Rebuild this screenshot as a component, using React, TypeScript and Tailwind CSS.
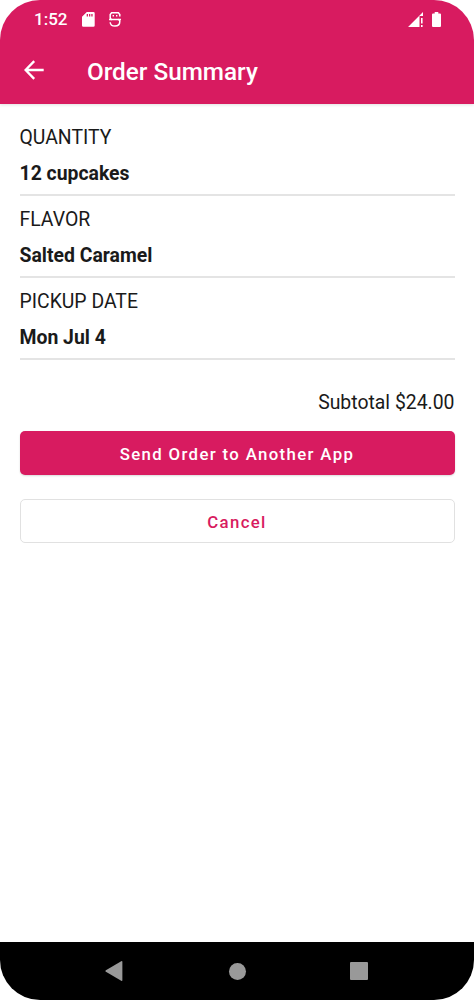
const summary = [
  { label: "QUANTITY", value: "12 cupcakes" },
  { label: "FLAVOR", value: "Salted Caramel" },
  { label: "PICKUP DATE", value: "Mon Jul 4" },
];

function StatusBar() {
  return (
    <div className="flex h-[38px] items-center pr-[33px] pl-[34px] text-white">
      <span className="text-[17px] leading-5 font-medium">1:52</span>
      {/* SD card */}
      <svg className="ml-[15px]" width="13" height="15" viewBox="0 0 13 15">
        <path
          fill="currentColor"
          fillRule="evenodd"
          d="M4.8 0H11.4Q12.7 0 12.7 1.3V13.5Q12.7 14.8 11.4 14.8H1.3Q0 14.8 0 13.5V4.8ZM4.7 2V4.4H6V2ZM7 2V4.4H8.3V2ZM9.3 2V4.4H10.6V2Z"
        />
      </svg>
      {/* Debug robot */}
      <svg
        className="ml-[14px]"
        width="12"
        height="15"
        viewBox="0 0 12 15"
        fill="none"
        stroke="currentColor"
        strokeWidth="1.5"
      >
        <path d="M10.8 4.4V2.6L9.4 .8H2.6L1.2 2.6V5.4Q1.2 7.5 3 7.5H9Q10.8 7.5 10.8 9.6C10.8 12.6 8.9 14.1 6 14.1C3.4 14.1 1.4 12.8 1.2 10.2" />
        <path d="M0 7.5H3M9 7.5H12" strokeWidth="1.3" />
        <path d="M3.6 3.7H5M7 3.7H8.4" strokeWidth="1.4" />
      </svg>
      <div className="ml-auto flex items-center gap-[9px]">
        <svg width="15" height="15" viewBox="0 0 15 15" fill="currentColor">
          <path d="M0 15L15 0V4H11.5V15Z" />
          <path d="M13 6H14.6V11.5H13ZM13 13H14.6V15H13Z" />
        </svg>
        <svg width="9" height="15" viewBox="0 0 9 15" fill="currentColor">
          <path d="M2.7 0H6.3V1.5H8Q9 1.5 9 2.5V14Q9 15 8 15H1Q0 15 0 14V2.5Q0 1.5 1 1.5H2.7Z" />
        </svg>
      </div>
    </div>
  );
}

function NavigationBar() {
  return (
    <nav className="flex h-[58px] items-center bg-black pl-[105px] text-[#999999]">
      <button aria-label="Back">
        <svg width="18" height="20" viewBox="0 0 18 20" fill="currentColor">
          <path d="M16.2 .3Q17.4-.3 17.4 1V19Q17.4 20.3 16.2 19.7L.9 10.8Q-.2 10 .9 9.2Z" />
        </svg>
      </button>
      <button
        aria-label="Home"
        className="ml-[105.5px] size-[17px] rounded-full bg-[#999999]"
      />
      <button
        aria-label="Recent apps"
        className="ml-[104px] size-[18.5px] rounded-[1px] bg-[#999999]"
      />
    </nav>
  );
}

export default function App() {
  return (
    <div className="h-[1000px] w-[474px] bg-white font-['Roboto',sans-serif]">
      <div className="flex h-full flex-col overflow-hidden rounded-[40px] bg-white">
        <header className="h-[104px] bg-[#d81b60] shadow-[0_1px_3px_rgba(0,0,0,0.12)]">
          <StatusBar />
          <div className="flex h-[65px] items-center pl-[24px] text-white">
            <button aria-label="Navigate up" className="-mt-px">
              <svg
                width="20"
                height="20"
                viewBox="0 0 20 20"
                fill="none"
                stroke="currentColor"
                strokeWidth="2.3"
              >
                <path d="M19.7 10H2M10.2 1.1L1.6 10L10.2 18.9" />
              </svg>
            </button>
            <h1 className="ml-[43px] pt-0.5 text-[24.3px] leading-7 font-medium">
              Order Summary
            </h1>
          </div>
        </header>

        <main className="flex-1 px-[19.5px] pt-[22px] text-[19.4px] leading-6 text-[#1a1a1a]">
          {summary.map((item) => (
            <div
              key={item.label}
              className="mb-3 border-b-2 border-[#e4e4e4] pb-2"
            >
              <div>{item.label}</div>
              <div className="mt-3 font-bold">{item.value}</div>
            </div>
          ))}

          <p className="mt-[31px] text-right">Subtotal $24.00</p>

          <button className="mt-4 flex h-[44px] w-full items-center justify-center rounded-[5px] bg-[#d81b60] pt-px text-[16.8px] font-medium tracking-[1.35px] text-white shadow-[0_1px_2px_rgba(0,0,0,0.15)]">
            Send Order to Another App
          </button>
          <button className="mt-6 flex h-[44px] w-full items-center justify-center rounded-[5px] border-[1.5px] border-[#e1e1e1] pt-px text-[16.8px] font-medium tracking-[1.35px] text-[#d81b60]">
            Cancel
          </button>
        </main>

        <NavigationBar />
      </div>
    </div>
  );
}
